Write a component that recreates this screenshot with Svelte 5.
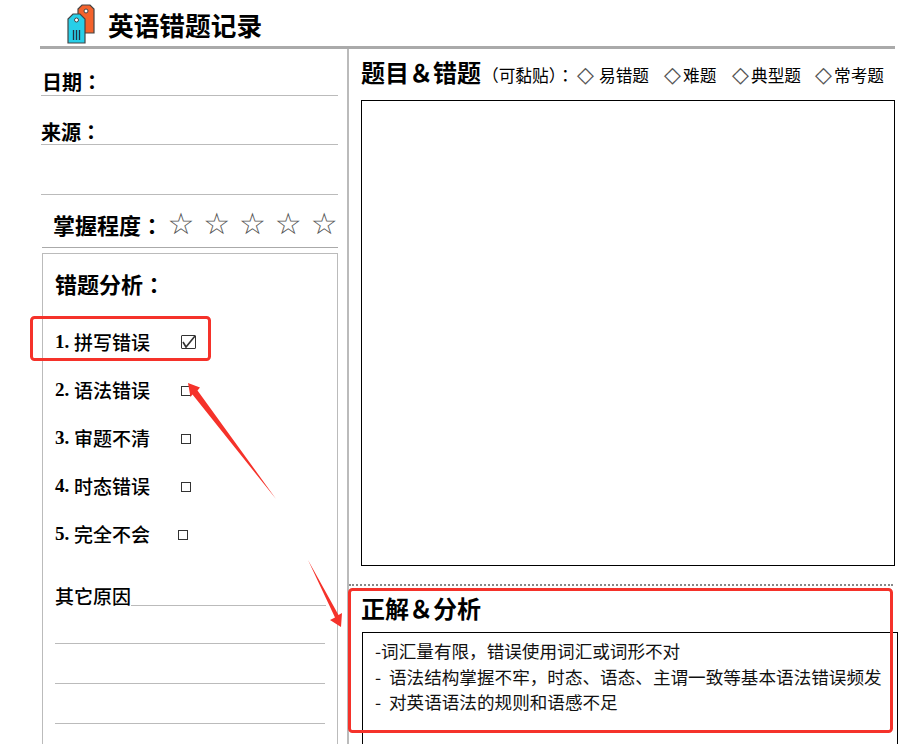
<script>
  const items = [
    { label: '拼写错误', checked: true, gap: 0 },
    { label: '语法错误', checked: false, gap: 0 },
    { label: '审题不清', checked: false, gap: 0 },
    { label: '时态错误', checked: false, gap: 0 },
    { label: '完全不会', checked: false, gap: -3 }
  ];
  const tags = ['易错题', '难题', '典型题', '常考题'];
  const notes = ['-词汇量有限，错误使用词汇或词形不对', '-  语法结构掌握不牢，时态、语态、主谓一致等基本语法错误频发', '-  对英语语法的规则和语感不足'];
</script>

<div class="page">
  <header class="head">
    <svg class="logo" width="28" height="40" viewBox="0 0 28 40">
      <path d="M15 1h8l4 4v24H11V5z" fill="#f4622c" stroke="#444" stroke-width="1.200"/>
      <circle cx="19" cy="7" r="2" fill="#fff" stroke="#444"/>
      <path d="M6 10h7l5 5v24H1V15z" fill="#27cfe8" stroke="#444" stroke-width="1.200"/>
      <circle cx="9.500" cy="16" r="2" fill="#fff" stroke="#444"/>
      <path d="M6.500 26v10M9.500 26v10M12.500 26v10" stroke="#234" stroke-width="1.300"/>
    </svg>
    <h1>英语错题记录</h1>
  </header>

  <div class="cols">
    <aside class="left">
      <div class="field date">日期<span class="colon">：</span></div>
      <div class="field source">来源<span class="colon">：</span></div>
      <div class="field blank"></div>
      <div class="mastery">
        <span class="mlabel">掌握程度<span class="colon">：</span></span>
        <span class="stars">{#each [1,2,3,4,5] as s}<span class="star">☆</span>{/each}</span>
      </div>
      <section class="analysis">
        <h2>错题分析<span class="colon">：</span></h2>
        <ol>
          {#each items as it, i}
            <li>
              <span class="num">{i + 1}.</span><span class="lbl">{it.label}</span>
              <span class="box" class:shift={it.gap < 0}>
                {#if it.checked}
                  <svg width="14" height="14" viewBox="0 0 14 14"><path d="M1 7l3 5L13 1" fill="none" stroke="#333" stroke-width="1.600"/></svg>
                {/if}
              </span>
            </li>
          {/each}
        </ol>
        <div class="other"><span>其它原因</span><i></i></div>
        <div class="rule"></div>
        <div class="rule"></div>
        <div class="rule"></div>
      </section>
    </aside>

    <main class="right">
      <div class="qhead">
        <h2>题目＆错题</h2>
        <span class="hint">（可黏贴）<span class="colon">：</span></span>
        {#each tags as t, i}
          <span class="tag t{i}"><b>◇</b>{t}</span>
        {/each}
      </div>
      <div class="qbox"></div>
      <div class="dots"></div>
      <h2 class="ans">正解＆分析</h2>
      <div class="abox">
        {#each notes as n}<p>{n}</p>{/each}
      </div>
    </main>
  </div>

  <svg class="marks" width="913" height="744" viewBox="0 0 913 744">
    <rect x="31.500" y="317.500" width="178" height="42" rx="3" fill="none" stroke="#f5322a" stroke-width="3"/>
    <rect x="349.500" y="589.500" width="542" height="142" rx="3" fill="none" stroke="#f5322a" stroke-width="3"/>
    <path d="M188 383L200 387.500L197.500 390.500L276 499L192.500 394.500L190.500 397z" fill="#f5322a"/>
    <path d="M341 627L330 620L335 617.500L308 560L338.500 615L342 613z" fill="#f5322a"/>
  </svg>
</div>

<style>
  :global(body) { margin: 0; background: #fff; }
  .page {
    position: relative;
    width: 913px;
    height: 744px;
    overflow: hidden;
    background: #fff;
    color: #000;
    font-family: "Liberation Serif", "Noto Sans CJK SC", serif;
  }
  .head {
    display: flex;
    align-items: flex-start;
    width: 855px;
    height: 46px;
    margin-left: 40px;
    border-bottom: 3px solid #aaa;
  }
  .logo { margin: 4px 0 0 27px; }
  h1 {
    margin: 9px 0 0 13px;
    font: 700 25.700px/32px "Noto Sans CJK SC", sans-serif;
  }
  .colon { font-family: "Noto Sans CJK TC", sans-serif; }
  .cols { display: flex; margin-left: 40px; height: 695px; }
  .left {
    width: 307px;
    flex: none;
    border-right: 2px solid #bbb;
  }
  .field {
    width: 297px;
    margin-left: 1px;
    padding-left: 1px;
    box-sizing: border-box;
    border-bottom: 1px solid #bbb;
    font: 700 20px/28px "Noto Sans CJK SC", sans-serif;
  }
  .date { height: 47px; padding-top: 19px; }
  .source { height: 49px; padding-top: 22px; padding-left: 0; }
  .blank { height: 50px; }
  .mastery {
    display: flex;
    align-items: center;
    width: 296px;
    height: 53px;
    margin-left: 2px;
    padding-top: 5px;
    border-bottom: 1px solid #aaa;
    box-sizing: border-box;
  }
  .mlabel { margin-left: 11px; font: 700 22px/30px "Noto Sans CJK SC", sans-serif; width: 110px; flex: none; white-space: nowrap; }
  .stars { display: flex; }
  .star { width: 35.800px; text-align: center; font: 30px/30px "DejaVu Sans", sans-serif; color: #555; }
  .analysis {
    width: 296px;
    box-sizing: border-box;
    margin: 5px 0 0 2px;
    height: 600px;
    border: 1px solid #bbb;
    padding-left: 12px;
  }
  .analysis h2 { margin: 14px 0 0; font: 700 22px/30px "Noto Sans CJK SC", sans-serif; }
  ol { list-style: none; margin: 20px 0 0; padding: 0; }
  li { display: flex; align-items: center; height: 48px; font-size: 19px; font-weight: 700; }
  .num { width: 19px; flex: none; font-weight: 700; }
  .lbl { width: 107px; flex: none; font: 500 19px/28px "Noto Sans CJK SC", sans-serif; }
  .box {
    box-sizing: border-box;
    width: 10px;
    height: 10px;
    margin-top: 2px;
    border: 1px solid #333;
    position: relative;
  }
  li:first-child .box { width: 15px; height: 14px; margin-top: 0; border-radius: 1px; }
  li:first-child .box svg { position: absolute; left: 0; top: -1px; }
  .box.shift { margin-left: -3px; }
  .other { display: flex; align-items: flex-end; margin-top: 21px; height: 28px; font: 500 19px/28px "Noto Sans CJK SC", sans-serif; }
  .other span { margin-bottom: -3px; }
  .other i { display: block; width: 195px; border-bottom: 1px solid #bbb; margin-bottom: 1px; }
  .rule { width: 270px; height: 39px; border-bottom: 1px solid #bbb; }
  .other + .rule { height: 36px; }

  .right { width: 548px; flex: none; }
  .qhead { display: flex; align-items: center; height: 51px; margin-left: 12px; white-space: nowrap; }
  .qhead h2 { margin: -5px 0 0; font: 700 24px/30px "Noto Sans CJK SC", sans-serif; width: 121px; flex: none; }
  .hint { font: 400 16.700px/24px "Noto Sans CJK SC", sans-serif; width: 95px; flex: none; }
  .tag { display: inline-flex; align-items: center; font: 400 16.700px/24px "Noto Sans CJK SC", sans-serif; }
  .tag b { font: 400 22px/24px "DejaVu Sans", sans-serif; color: #555; width: 19px; }
  .t0 { width: 87px; } .t0 b { width: 22px; }
  .t1 { width: 68px; }
  .t2 { width: 83px; }
  .qbox { width: 532px; height: 464px; margin-left: 12px; border: 1px solid #000; }
  .dots { width: 544px; margin: 18px 0 0; border-top: 2px dotted #888; }
  .ans { margin: 7px 0 0 12px; font: 700 24px/30px "Noto Sans CJK SC", sans-serif; }
  .abox {
    box-sizing: border-box;
    width: 536px;
    height: 120px;
    margin: 9px 0 0 13px;
    padding: 5px 12px;
    border: 1px solid #000;
    border-bottom: 0;
    overflow: hidden;
  }
  .abox p { margin: 0; font: 400 17.600px/25.500px "Noto Sans CJK SC", sans-serif; white-space: pre; color: #111; }
  .marks { position: absolute; left: 0; top: 0; pointer-events: none; }
</style>
